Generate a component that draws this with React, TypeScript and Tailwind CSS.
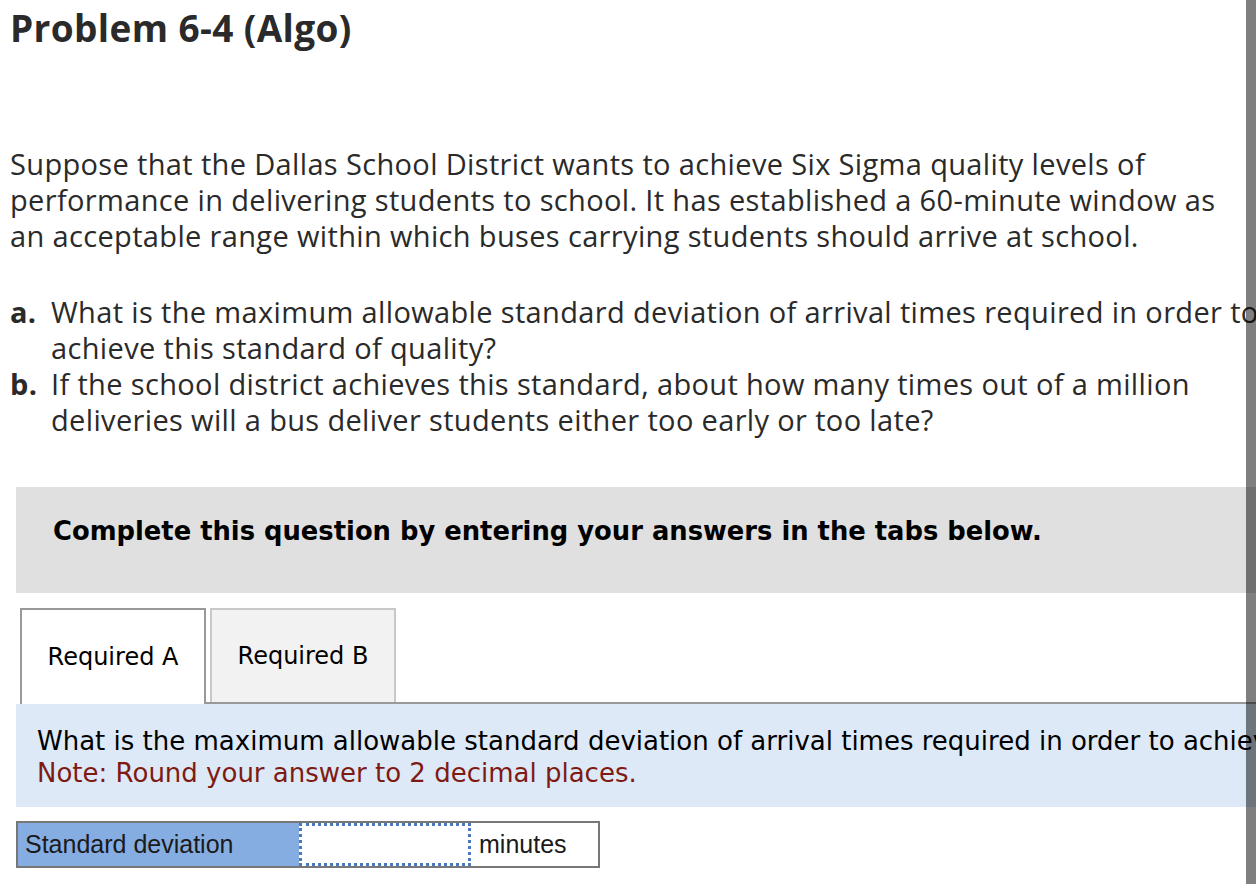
export default function App() {
  return (
    <div className="relative h-[884px] w-full overflow-hidden bg-white">
      <div className="w-[1320px]">
        {/* 题目标题与正文 */}
        <div className="w-[1264px] pl-[10px] text-[#2a2a2a] font-['Open_Sans',sans-serif]">
          <h1 className="pt-[6px] text-[37px] leading-[44px] font-bold tracking-[0.01em]">Problem 6-4 (Algo)</h1>
          <p className="mt-[96px] w-[1228px] text-[29px] leading-[36px] tracking-[0.012em]">
            Suppose that the Dallas School District wants to achieve Six Sigma quality levels of performance in
            delivering students to school. It has established a 60-minute window as an acceptable range within which
            buses carrying students should arrive at school.
          </p>
          <ol className="mt-[40px] text-[29px] leading-[36px] tracking-[0.012em]">
            <li className="flex">
              <span className="w-[41px] shrink-0 font-bold">a.</span>
              <span>
                What is the maximum allowable standard deviation of arrival times required in order to achieve this
                standard of quality?
              </span>
            </li>
            <li className="flex">
              <span className="w-[41px] shrink-0 font-bold">b.</span>
              <span>
                If the school district achieves this standard, about how many times out of a million deliveries will a
                bus deliver students either too early or too late?
              </span>
            </li>
          </ol>
        </div>

        {/* 提示条 */}
        <div className="mt-[49px] ml-[16px] h-[106px] bg-[#e0e0e0] pt-[28px] pl-[37px] font-['DejaVu_Sans',Verdana,sans-serif] text-[25.8px] leading-[32px] font-bold text-black">
          Complete this question by entering your answers in the tabs below.
        </div>

        {/* 选项卡 */}
        <div className="mt-[15px] ml-[20px] flex items-end font-['DejaVu_Sans',Verdana,sans-serif] text-[24px] text-black">
          <div className="flex h-[96px] w-[186px] items-center justify-center border-2 border-b-0 border-[#999] bg-white">
            Required A
          </div>
          <div className="flex flex-1 border-b-2 border-[#999] pl-[4px]">
            <div className="flex h-[94px] w-[186px] items-center justify-center border-2 border-b-0 border-[#c8c8c8] bg-[#f2f2f2]">
              Required B
            </div>
          </div>
        </div>

        <div className="ml-[16px] h-[103px] bg-[#dde9f7] pt-[21px] pl-[21px] font-['DejaVu_Sans',Verdana,sans-serif] text-[26px] leading-[32px] whitespace-nowrap">
          <div className="text-black">
            What is the maximum allowable standard deviation of arrival times required in order to achieve this
            standard of quality?
          </div>
          <div className="text-[#7f1a13]">Note: Round your answer to 2 decimal places.</div>
        </div>

        {/* 答案输入行 */}
        <div className="mt-[14px] ml-[16px] flex h-[47px] w-[584px] border-2 border-[#777] font-['Liberation_Sans',Arial,sans-serif] text-[25px] text-[#1a1a1a]">
          <div className="flex w-[281px] items-center bg-[#86ade1] pl-[7px]">Standard deviation</div>
          <input
            type="text"
            className="w-[172px] border-[3px] border-dotted border-[#4b79bd] bg-white px-2 outline-none"
          />
          <div className="flex flex-1 items-center pl-[8px]">minutes</div>
        </div>
      </div>

      {/* 右侧滚动条遮罩 */}
      <div className="absolute top-0 right-0 h-full w-[10px] bg-black/50" />
    </div>
  );
}
